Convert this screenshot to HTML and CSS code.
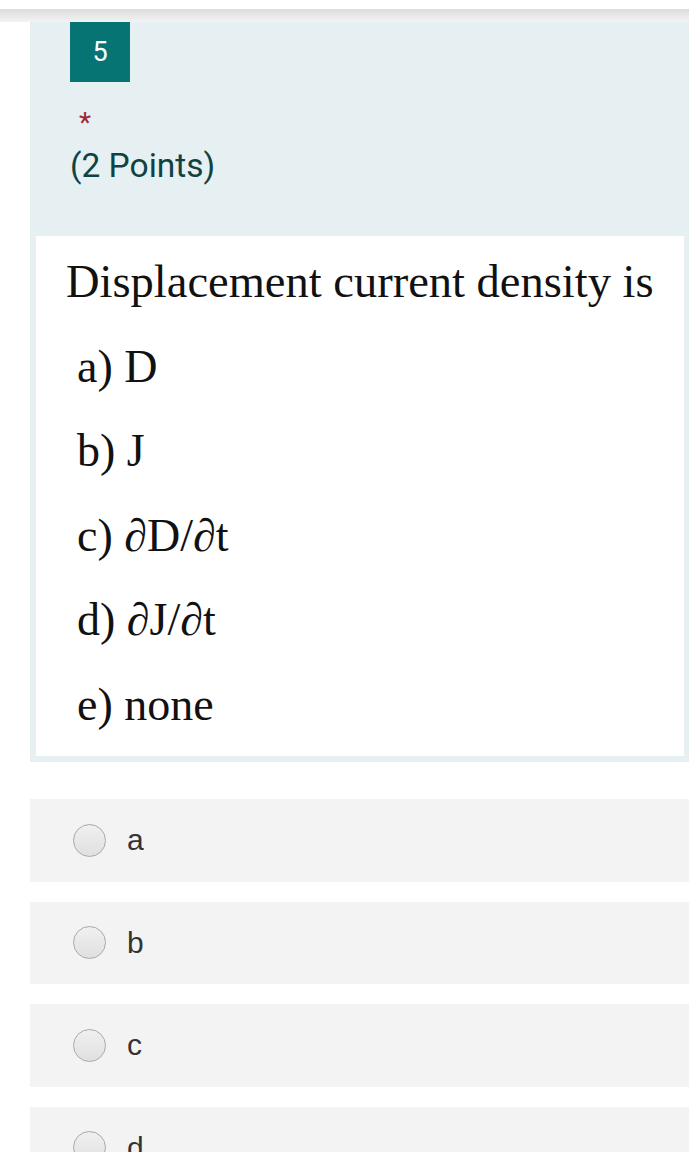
FILE: index.html
```
<!DOCTYPE html>
<html>
<head>
<meta charset="utf-8">
<link rel="stylesheet" href="styles.css">
</head>
<body>
<div class="topgap"></div>
<div class="shade"></div>
<div class="card">
  <div class="header">
    <div class="qnum">5</div>
    <div class="asterisk">*</div>
    <div class="points">(2 Points)</div>
  </div>
  <div class="qimage">
    <div class="title">Displacement current density is</div>
    <div class="opt">a) D</div>
    <div class="opt">b) J</div>
    <div class="opt">c) ∂D/∂t</div>
    <div class="opt">d) ∂J/∂t</div>
    <div class="opt">e) none</div>
  </div>
</div>
<div class="choices">
  <div class="choice"><span class="radio"></span><span class="label">a</span></div>
  <div class="choice"><span class="radio"></span><span class="label">b</span></div>
  <div class="choice"><span class="radio"></span><span class="label">c</span></div>
  <div class="choice"><span class="radio"></span><span class="label">d</span></div>
</div>
</body>
</html>
```
FILE: styles.css
```
html, body {
  margin: 0;
  padding: 0;
  background: #ffffff;
  overflow: hidden;
}
body {
  width: 689px;
  height: 1152px;
  font-family: Roboto, "Liberation Sans", sans-serif;
}
.topgap {
  height: 9px;
}
.shade {
  height: 13px;
  background: linear-gradient(#dcdcdc, #f3f3f3);
}
.card {
  margin-left: 30px;
  background: #e6eff2;
  padding: 0 5px 6px 6px;
}
.header {
  height: 214px;
  padding-left: 34px;
  box-sizing: border-box;
}
.qnum {
  width: 60px;
  height: 60px;
  background: #077474;
  color: #ffffff;
  font-size: 27px;
  line-height: 60px;
  text-align: center;
}
.asterisk {
  margin-top: 26px;
  margin-left: 9px;
  color: #a4262c;
  font-size: 28px;
  line-height: 30px;
  height: 30px;
}
.points {
  margin-top: 8px;
  color: #0f4343;
  font-size: 33.5px;
  line-height: 40px;
}
.qimage {
  background: #ffffff;
  padding: 4px 0 9px 30px;
  font-family: "Liberation Serif", "Times New Roman", serif;
  color: #111111;
}
.title {
  font-size: 46.5px;
  line-height: 84.5px;
}
.opt {
  font-size: 46px;
  line-height: 84.5px;
  padding-left: 11px;
}
.choices {
  margin-top: 37px;
  margin-left: 30px;
  display: flex;
  flex-direction: column;
  gap: 20px;
}
.choice {
  height: 82.5px;
  background: #f3f3f3;
  display: flex;
  align-items: center;
  padding-left: 43px;
}
.radio {
  width: 31px;
  height: 31px;
  border: 1px solid #a9a9a9;
  border-radius: 50%;
  background: linear-gradient(#f0f0f0, #e0e0e0);
  flex: none;
}
.label {
  margin-left: 21px;
  font-family: "Liberation Sans", Arial, sans-serif;
  font-size: 30px;
  color: #333333;
}
```
